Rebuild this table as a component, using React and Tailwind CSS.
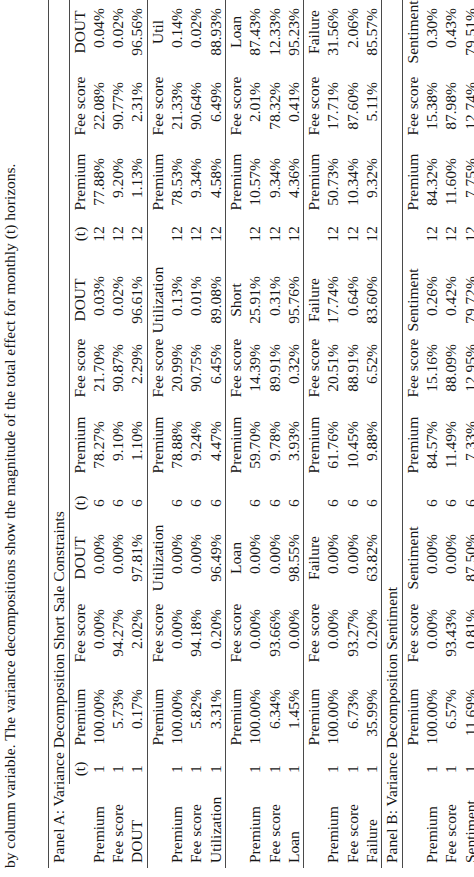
import React from "react";

// column tracks: label, then three groups of (t) / Premium / Fee score / third variable
const cols =
  "grid grid-cols-[87px_24px_68px_80px_75px_62px_51px_77px_68px_84px_34px_76px_74px]";

const panelA = [
  {
    head: [["Premium", "Fee score", "DOUT"], ["Premium", "Fee score", "DOUT"], ["Premium", "Fee score", "DOUT"]],
    showT: true,
    rows: [
      ["Premium", "1", "100.00%", "0.00%", "0.00%", "6", "78.27%", "21.70%", "0.03%", "12", "77.88%", "22.08%", "0.04%"],
      ["Fee score", "1", "5.73%", "94.27%", "0.00%", "6", "9.10%", "90.87%", "0.02%", "12", "9.20%", "90.77%", "0.02%"],
      ["DOUT", "1", "0.17%", "2.02%", "97.81%", "6", "1.10%", "2.29%", "96.61%", "12", "1.13%", "2.31%", "96.56%"],
    ],
  },
  {
    head: [["Premium", "Fee score", "Utilization"], ["Premium", "Fee score", "Utilization"], ["Premium", "Fee score", "Util"]],
    rows: [
      ["Premium", "1", "100.00%", "0.00%", "0.00%", "6", "78.88%", "20.99%", "0.13%", "12", "78.53%", "21.33%", "0.14%"],
      ["Fee score", "1", "5.82%", "94.18%", "0.00%", "6", "9.24%", "90.75%", "0.01%", "12", "9.34%", "90.64%", "0.02%"],
      ["Utilization", "1", "3.31%", "0.20%", "96.49%", "6", "4.47%", "6.45%", "89.08%", "12", "4.58%", "6.49%", "88.93%"],
    ],
  },
  {
    head: [["Premium", "Fee score", "Loan"], ["Premium", "Fee score", "Short"], ["Premium", "Fee score", "Loan"]],
    rows: [
      ["Premium", "1", "100.00%", "0.00%", "0.00%", "6", "59.70%", "14.39%", "25.91%", "12", "10.57%", "2.01%", "87.43%"],
      ["Fee score", "1", "6.34%", "93.66%", "0.00%", "6", "9.78%", "89.91%", "0.31%", "12", "9.34%", "78.32%", "12.33%"],
      ["Loan", "1", "1.45%", "0.00%", "98.55%", "6", "3.93%", "0.32%", "95.76%", "12", "4.36%", "0.41%", "95.23%"],
    ],
  },
  {
    head: [["Premium", "Fee score", "Failure"], ["Premium", "Fee score", "Failure"], ["Premium", "Fee score", "Failure"]],
    rows: [
      ["Premium", "1", "100.00%", "0.00%", "0.00%", "6", "61.76%", "20.51%", "17.74%", "12", "50.73%", "17.71%", "31.56%"],
      ["Fee score", "1", "6.73%", "93.27%", "0.00%", "6", "10.45%", "88.91%", "0.64%", "12", "10.34%", "87.60%", "2.06%"],
      ["Failure", "1", "35.99%", "0.20%", "63.82%", "6", "9.88%", "6.52%", "83.60%", "12", "9.32%", "5.11%", "85.57%"],
    ],
  },
];

const panelB = {
  head: [["Premium", "Fee score", "Sentiment"], ["Premium", "Fee score", "Sentiment"], ["Premium", "Fee score", "Sentiment"]],
  rows: [
    ["Premium", "1", "100.00%", "0.00%", "0.00%", "6", "84.57%", "15.16%", "0.26%", "12", "84.32%", "15.38%", "0.30%"],
    ["Fee score", "1", "6.57%", "93.43%", "0.00%", "6", "11.49%", "88.09%", "0.42%", "12", "11.60%", "87.98%", "0.43%"],
    ["Sentiment", "1", "11.69%", "0.81%", "87.50%", "6", "7.33%", "12.95%", "79.72%", "12", "7.75%", "12.74%", "79.51%"],
  ],
};

function HeaderRow({ groups, showT }) {
  return (
    <div className={cols}>
      <div />
      {groups.map((g, gi) => (
        <React.Fragment key={gi}>
          <div className="flex justify-center">{showT ? "(t)" : ""}</div>
          {g.map((name, i) => (
            <div key={i} className="flex justify-end">
              <div className={`flex justify-center ${gi === 0 && i === 0 ? "w-[56px]" : "w-[48px]"}`}>
                <span className="whitespace-nowrap">{name}</span>
              </div>
            </div>
          ))}
        </React.Fragment>
      ))}
    </div>
  );
}

function DataRow({ row }) {
  const [label, ...cells] = row;
  return (
    <div className={cols}>
      <div className="pl-[5px] whitespace-nowrap">{label}</div>
      {cells.map((c, i) =>
        i % 4 === 0 ? (
          <div key={i} className="flex justify-center">{c}</div>
        ) : (
          <div key={i} className="flex justify-end">
            <span className="whitespace-nowrap">{c}</span>
          </div>
        )
      )}
    </div>
  );
}

function Block({ block }) {
  return (
    <>
      <HeaderRow groups={block.head} showT={block.showT} />
      {block.rows.map((r, i) => (
        <DataRow key={i} row={r} />
      ))}
    </>
  );
}

export default function App() {
  return (
    <div className="w-[474px] h-[877px] overflow-hidden bg-white">
      {/* the page is printed sideways: lay it out flat, then turn it */}
      <div className="w-[877px] h-[474px] origin-top-left translate-y-[877px] -rotate-90">
        <div className="pl-[6px] text-[15.5px] leading-[19.3px] text-[#161616] font-['Liberation_Serif','Times_New_Roman',serif]">
          <p className="-mt-[3.4px] whitespace-nowrap">
            by column variable. The variance decompositions show the magnitude of the total effect for monthly (t) horizons.
          </p>

          <div className="mt-[29px] w-[900px] border-t border-[#4a4a4a]">
            <div className="pl-[5px] whitespace-nowrap">Panel A: Variance Decomposition Short Sale Constraints</div>
            <div className="ml-[84px] border-t border-[#4a4a4a]" />
            {panelA.map((b, i) => (
              <React.Fragment key={i}>
                {i > 0 && <div className="border-t border-[#4a4a4a]" />}
                <Block block={b} />
              </React.Fragment>
            ))}
            <div className="border-t border-[#4a4a4a]" />
            <div className="pl-[5px] whitespace-nowrap">Panel B: Variance Decomposition Sentiment</div>
            <div className="border-t border-[#4a4a4a]" />
            <Block block={panelB} />
          </div>
        </div>
      </div>
    </div>
  );
}
